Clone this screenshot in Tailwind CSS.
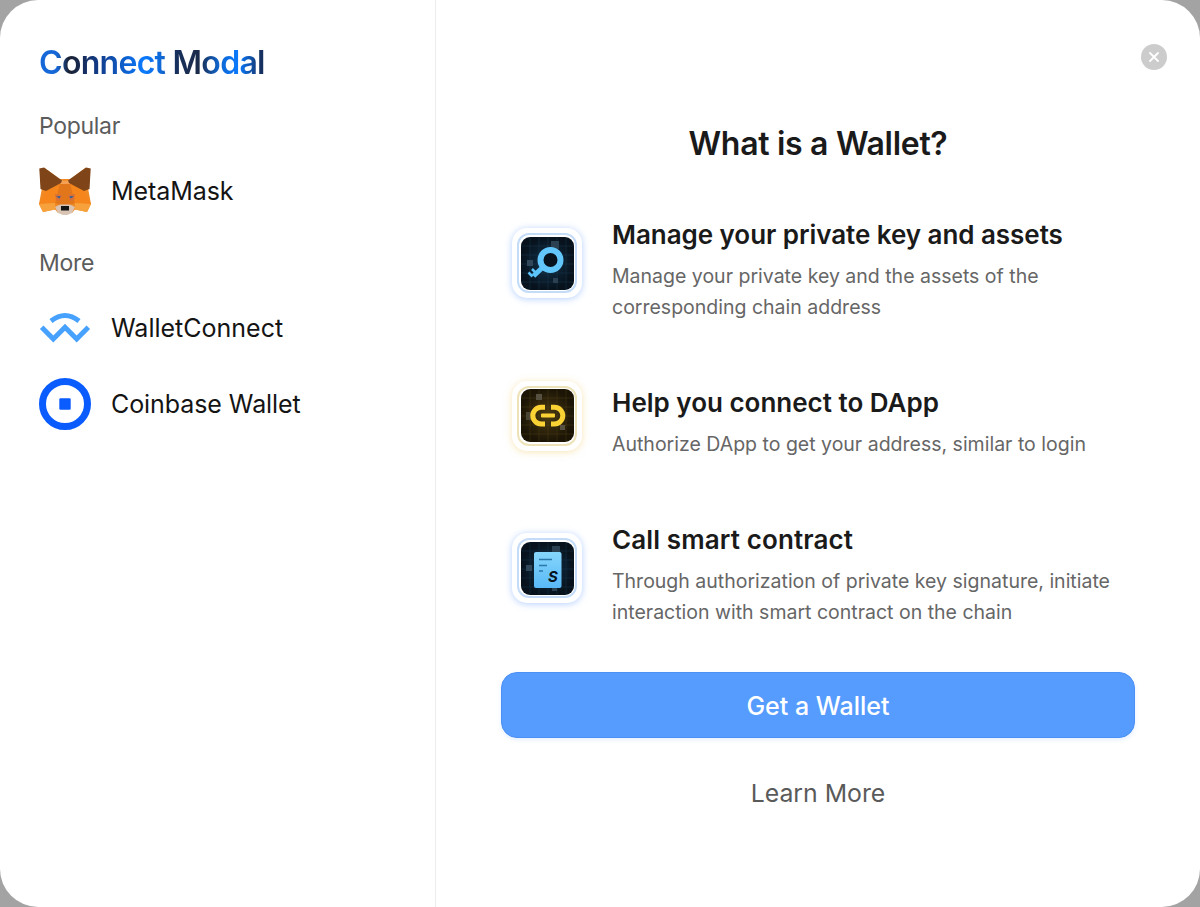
<!DOCTYPE html>
<html lang="en">
<head>
    <meta charset="UTF-8">
    <meta name="viewport" content="width=device-width, initial-scale=1.0">
    <title>Connect Modal</title>
    <script src="https://cdn.jsdelivr.net/npm/@tailwindcss/browser@4"></script>
</head>
<body class="bg-[#a3a3a3] font-['Inter',sans-serif]">
    <div class="flex h-[907px] w-[1200px] overflow-hidden rounded-[38px] bg-white">
        <!-- Wallet list -->
        <aside class="w-[436px] shrink-0 border-r border-[#ececec] pl-[39px]">
            <h1 class="mt-[43px] h-[40px] w-fit bg-[linear-gradient(90deg,#1668d8_0px,#1668d8_18px,#1b2030_30px,#123a86_58px,#0a7aff_105px,#0f66d0_124px,#16305f_136px,#1b2a48_160px,#0f66d0_180px,#0a7aff_200px,#16305f_222px)] bg-clip-text text-[32px] leading-[40px] font-semibold tracking-[-0.7px] text-transparent">Connect Modal</h1>

            <p class="mt-[28px] text-[23px] leading-[30px] tracking-[-0.3px] text-[#5c5c5c]">Popular</p>
            <div class="mt-[24px] flex h-[52px] items-center gap-[20px]">
                <svg class="h-[52px] w-[52px] shrink-0" viewBox="39 165 52 52">
                    <polygon points="58,179 72,179 88,188 91,204 87,212 75,209.500 72,213 58,213 55,209.500 43,212 39,204 42,188" fill="#f08a24"/>
                    <polygon points="44,167.500 62,180.500 65,181 68,180.500 86,167.500 71,186 59,186" fill="#f6a054"/>
                    <polygon points="59,184 71,184 72,190 75,203 65,207 55,203 58,190" fill="#e2761b"/>
                    <polygon points="46,191 60,183 55,203 39,204" fill="#f6851b"/>
                    <polygon points="84,191 70,183 75,203 91,204" fill="#f6851b"/>
                    <polygon points="39.300,168.500 44,167.500 62,180.500 61,183 46,191 40.500,189" fill="#7f4518"/>
                    <polygon points="90.700,168.500 86,167.500 68,180.500 69,183 84,191 89.500,189" fill="#7f4518"/>
                    <polygon points="39,204 55,203 55,209.500 43,212" fill="#f7a13c"/>
                    <polygon points="91,204 75,203 75,209.500 87,212" fill="#f7a13c"/>
                    <polygon points="55,194 62,195 60,201 56,200" fill="#d8703a"/>
                    <polygon points="75,194 68,195 70,201 74,200" fill="#d8703a"/>
                    <polygon points="56,196.500 60.500,196 59.500,198.500" fill="#2f5f96"/>
                    <polygon points="74,196.500 69.500,196 70.500,198.500" fill="#2f5f96"/>
                    <polygon points="55,207 60,204.500 70,204.500 75,207 72,213 67,215 63,215 58,213" fill="#d9c3b2"/>
                    <polygon points="61,206 69,206 69,210.500 61,210.500" fill="#161616"/>
                </svg>
                <span class="text-[25px] leading-[32px] tracking-[-0.07px] text-[#141414]">MetaMask</span>
            </div>

            <p class="mt-[31px] text-[23px] leading-[30px] tracking-[-0.3px] text-[#5c5c5c]">More</p>
            <div class="mt-[24px] flex h-[52px] items-center gap-[20px]">
                <svg class="h-[52px] w-[52px] shrink-0" viewBox="39 302 52 52">
                    <path d="M51 321 Q65 310 79 321" fill="none" stroke="#47a1ff" stroke-width="5"/>
                    <path d="M41.700 327.300 L53.300 339 L65 327.300 L76.700 339 L88.300 327.300" fill="none" stroke="#47a1ff" stroke-width="5" stroke-linejoin="miter"/>
                </svg>
                <span class="text-[25px] leading-[32px] text-[#141414]">WalletConnect</span>
            </div>
            <div class="mt-[24px] flex h-[52px] items-center gap-[20px]">
                <svg class="h-[52px] w-[52px] shrink-0" viewBox="0 0 52 52">
                    <circle cx="26" cy="26" r="22.500" fill="none" stroke="#0a5cff" stroke-width="7"/>
                    <rect x="20.300" y="20.300" width="11.400" height="11.400" rx="1.200" fill="#0a5cff"/>
                </svg>
                <span class="text-[25px] leading-[32px] tracking-[-0.07px] text-[#141414]">Coinbase Wallet</span>
            </div>
        </aside>

        <!-- What is a wallet -->
        <main class="relative flex-1 pt-[124px]">
            <button class="absolute top-[44px] right-[33px] flex h-[26px] w-[26px] items-center justify-center rounded-full bg-[#cccccc]">
                <svg class="h-[12px] w-[12px]" viewBox="0 0 12 12"><path d="M2 2 L10 10 M10 2 L2 10" stroke="#ffffff" stroke-width="1.800" stroke-linecap="round"/></svg>
            </button>

            <h2 class="mx-auto w-[634px] text-center text-[32px] leading-[40px] font-semibold tracking-[-0.3px] text-[#1a1a1a]">What is a Wallet?</h2>

            <div class="mt-[53px] ml-[76px] flex flex-col gap-[62px]">
                <div class="flex items-center gap-[30px]">
                    <div class="flex h-[70px] w-[70px] shrink-0 -translate-y-[7px] items-center justify-center rounded-[15px] bg-white shadow-[0_1px_7px_rgba(90,150,255,0.45)]">
                        <div class="flex h-[60px] w-[60px] items-center justify-center rounded-[12px] border-2 border-[#c4dcf8]">
                            <svg class="h-[53px] w-[53px] rounded-[9px]" viewBox="0 0 53 53">
                                <defs>
                                    <radialGradient id="keyBg"><stop offset="0" stop-color="#12334c"/><stop offset="1" stop-color="#07121c"/></radialGradient>
                                </defs>
                                <rect width="53" height="53" fill="url(#keyBg)"/>
                                <path d="M9 0V53M18 0V53M27 0V53M36 0V53M45 0V53M0 9H53M0 18H53M0 27H53M0 36H53M0 45H53" stroke="#1f4059" stroke-width="0.400"/>
                                <rect x="30" y="4" width="8" height="8" fill="#2b4050"/>
                                <rect x="6" y="23" width="6" height="6" fill="#31485a"/>
                                <rect x="32" y="41" width="5" height="5" fill="#2b4050"/>
                                <path d="M21 31 L12.500 39" stroke="#5cc4fb" stroke-width="5"/>
                                <path d="M15 36 L11 32 M11.500 39.500 L7.500 35.500" stroke="#5cc4fb" stroke-width="2.500"/>
                                <circle cx="29.500" cy="23" r="10" fill="#07121c" stroke="#62c6fb" stroke-width="6"/>
                            </svg>
                        </div>
                    </div>
                    <div>
                        <h3 class="text-[26px] leading-[36px] font-semibold tracking-[-0.05px] text-[#1a1a1a]">Manage your private key and assets</h3>
                        <p class="mt-2 text-[19.5px] leading-[31px] text-[#666666]">Manage your private key and the assets of the<br>corresponding chain address</p>
                    </div>
                </div>

                <div class="flex items-center gap-[30px]">
                    <div class="flex h-[70px] w-[70px] shrink-0 -translate-y-[7px] items-center justify-center rounded-[15px] bg-white shadow-[0_1px_7px_rgba(245,205,110,0.5)]">
                        <div class="flex h-[60px] w-[60px] items-center justify-center rounded-[12px] border-2 border-[#eee3b8]">
                            <svg class="h-[53px] w-[53px] rounded-[9px]" viewBox="0 0 53 53">
                                <defs>
                                    <radialGradient id="linkBg"><stop offset="0" stop-color="#4a3a12"/><stop offset="1" stop-color="#1c1506"/></radialGradient>
                                </defs>
                                <rect width="53" height="53" fill="url(#linkBg)"/>
                                <path d="M9 0V53M18 0V53M27 0V53M36 0V53M45 0V53M0 9H53M0 18H53M0 27H53M0 36H53M0 45H53" stroke="#54431a" stroke-width="0.400"/>
                                <rect x="15" y="5" width="6" height="6" fill="#55503f"/>
                                <rect x="5" y="23" width="5" height="8" fill="#4a4534"/>
                                <rect x="39" y="36" width="5" height="5" fill="#55503f"/>
                                <path d="M24 18.200 H20.150 a8.350 8.350 0 0 0 0 16.700 H24 M30 18.200 H33.450 a8.350 8.350 0 0 1 0 16.700 H30" fill="none" stroke="#fbd233" stroke-width="5"/>
                                <rect x="20" y="24.500" width="14" height="4" rx="1" fill="#fbd233"/>
                            </svg>
                        </div>
                    </div>
                    <div>
                        <h3 class="text-[26px] leading-[36px] font-semibold text-[#1a1a1a]">Help you connect to DApp</h3>
                        <p class="mt-2 text-[19.5px] leading-[31px] text-[#666666]">Authorize DApp to get your address, similar to login</p>
                    </div>
                </div>

                <div class="flex items-center gap-[30px]">
                    <div class="flex h-[70px] w-[70px] shrink-0 -translate-y-[7px] items-center justify-center rounded-[15px] bg-white shadow-[0_1px_7px_rgba(90,150,255,0.45)]">
                        <div class="flex h-[60px] w-[60px] items-center justify-center rounded-[12px] border-2 border-[#c4dcf8]">
                            <svg class="h-[53px] w-[53px] rounded-[9px]" viewBox="0 0 53 53">
                                <defs>
                                    <linearGradient id="sheet" x1="0" y1="0" x2="0" y2="1">
                                        <stop offset="0" stop-color="#86d6fb"/>
                                        <stop offset="1" stop-color="#58b8f7"/>
                                    </linearGradient>
                                    <radialGradient id="sheetBg"><stop offset="0" stop-color="#12334c"/><stop offset="1" stop-color="#07121c"/></radialGradient>
                                </defs>
                                <rect width="53" height="53" fill="url(#sheetBg)"/>
                                <path d="M9 0V53M18 0V53M27 0V53M36 0V53M45 0V53M0 9H53M0 18H53M0 27H53M0 36H53M0 45H53" stroke="#1c3b53" stroke-width="0.400"/>
                                <rect x="31" y="4" width="8" height="8" fill="#2b4050"/>
                                <rect x="5" y="23" width="6" height="6" fill="#31485a"/>
                                <rect x="31" y="44" width="5" height="5" fill="#2b4050"/>
                                <rect x="13" y="10" width="27.500" height="36" rx="2" fill="url(#sheet)"/>
                                <path d="M18 17.500H31M18 23.500H26M18 29H22" stroke="#2b78aa" stroke-width="1.300"/>
                                <text x="27" y="40" font-size="15" font-weight="700" font-style="italic" fill="#06121c" font-family="Inter, sans-serif">S</text>
                            </svg>
                        </div>
                    </div>
                    <div>
                        <h3 class="text-[26px] leading-[36px] font-semibold tracking-[0.12px] text-[#1a1a1a]">Call smart contract</h3>
                        <p class="mt-2 text-[19.5px] leading-[31px] text-[#666666]">Through authorization of private key signature, initiate<br>interaction with smart contract on the chain</p>
                    </div>
                </div>
            </div>

            <button class="mt-[44px] ml-[65px] block h-[66px] w-[634px] rounded-[16px] border border-[#4a90f5] bg-[#569cff] pt-[3px] text-[25px] font-medium text-white shadow-[0_2px_4px_rgba(86,156,255,0.15)]">Get a Wallet</button>
            <button class="mt-[21px] ml-[65px] block h-[70px] w-[634px] text-[24.8px] font-normal text-[#5a5a5a]">Learn More</button>
        </main>
    </div>
</body>
</html>
